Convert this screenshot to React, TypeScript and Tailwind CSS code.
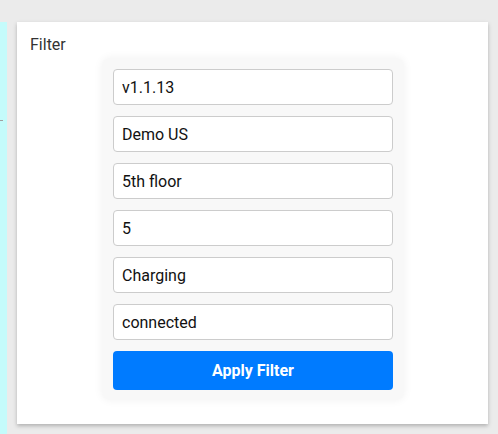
import React from "react";

const values = ["v1.1.13", "Demo US", "5th floor", "5", "Charging", "connected"];

export default function App() {
  return (
    <div
      className="w-[498px] h-[434px] bg-[#ebebeb] flex pt-[22px] overflow-hidden"
      style={{ fontFamily: "Roboto, 'Liberation Sans', sans-serif" }}
    >
      <div className="w-[7px] bg-[#c4fbfb] shrink-0 flex flex-col">
        <div className="mt-[98px] w-[3px] h-[1px] bg-[#a0a0a0]" />
      </div>
      <div className="ml-[10px] w-[471px] h-[402px] bg-white shadow-[0_2px_4px_rgba(0,0,0,0.25)] pt-[11px] px-[13px] flex flex-col shrink-0">
        <div className="text-[16px] leading-[24px] text-[#333]">Filter</div>
        <div className="mt-[1px] self-start ml-[72px] w-[302px] bg-[#f8f8f8] rounded-lg shadow-[0_0_10px_rgba(0,0,0,0.06)] pt-[11px] pb-[10px] px-[11px] flex flex-col gap-[11px]">
          {values.map((v) => (
            <input
              key={v}
              readOnly
              value={v}
              className="h-[36px] w-full bg-white border border-[#cccccc] rounded-[4px] px-2 text-[16px] text-[#111] outline-none"
              style={{ fontFamily: "Roboto, 'Liberation Sans', sans-serif" }}
            />
          ))}
          <button className="h-[39px] w-full bg-[#007bff] rounded-[4px] text-white font-bold text-[16px]">
            Apply Filter
          </button>
        </div>
      </div>
    </div>
  );
}
